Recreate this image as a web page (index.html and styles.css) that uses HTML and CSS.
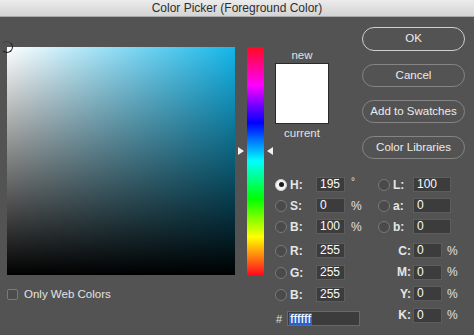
FILE: index.html
```html
<!DOCTYPE html>
<html>
<head>
<meta charset="utf-8">
<link rel="stylesheet" href="styles.css">
</head>
<body>
<div class="window">
  <div class="titlebar">Color Picker (Foreground Color)</div>
  <div class="main">
    <div class="leftcol">
      <div class="field"><span class="marker"></span></div>
      <div class="webcolors"><span class="checkbox"></span><span>Only Web Colors</span></div>
    </div>
    <div class="hue"><span class="arrow arrow-l"></span><span class="arrow arrow-r"></span></div>
    <div class="right">
      <div class="top">
        <div class="swatchcol">
          <div class="swlabel">new</div>
          <div class="swatch"></div>
          <div class="swlabel">current</div>
        </div>
        <div class="buttons">
          <div class="btn btn-default">OK</div>
          <div class="btn">Cancel</div>
          <div class="btn">Add to Swatches</div>
          <div class="btn">Color Libraries</div>
        </div>
      </div>
      <div class="fields">
        <div class="colA">
          <div class="group">
            <div class="row"><span class="radio checked"></span><span class="lbl">H:</span><span class="inp">195</span><span class="unit deg">°</span></div>
            <div class="row"><span class="radio"></span><span class="lbl">S:</span><span class="inp">0</span><span class="unit">%</span></div>
            <div class="row"><span class="radio"></span><span class="lbl">B:</span><span class="inp">100</span><span class="unit">%</span></div>
          </div>
          <div class="group rgb">
            <div class="row"><span class="radio"></span><span class="lbl">R:</span><span class="inp">255</span></div>
            <div class="row"><span class="radio"></span><span class="lbl">G:</span><span class="inp">255</span></div>
            <div class="row"><span class="radio"></span><span class="lbl">B:</span><span class="inp">255</span></div>
          </div>
          <div class="row hexrow"><span class="hash">#</span><span class="inp hex"><span class="sel">ffffff</span></span></div>
        </div>
        <div class="colB">
          <div class="group">
            <div class="row"><span class="radio"></span><span class="lbl">L:</span><span class="inp wide">100</span></div>
            <div class="row"><span class="radio"></span><span class="lbl">a:</span><span class="inp wide">0</span></div>
            <div class="row"><span class="radio"></span><span class="lbl">b:</span><span class="inp wide">0</span></div>
          </div>
          <div class="group cmyk">
            <div class="row"><span class="rlbl">C:</span><span class="inp">0</span><span class="unit">%</span></div>
            <div class="row"><span class="rlbl">M:</span><span class="inp">0</span><span class="unit">%</span></div>
            <div class="row"><span class="rlbl">Y:</span><span class="inp">0</span><span class="unit">%</span></div>
            <div class="row"><span class="rlbl">K:</span><span class="inp">0</span><span class="unit">%</span></div>
          </div>
        </div>
      </div>
    </div>
  </div>
</div>
</body>
</html>
```
FILE: styles.css
```css
* { box-sizing: border-box; }
html, body {
  margin: 0;
  padding: 0;
  background: #535353;
}
body {
  width: 474px;
  height: 335px;
  overflow: hidden;
  font-family: "Liberation Sans", Arial, sans-serif;
  color: #e4e4e4;
}
.window {
  width: 474px;
  height: 335px;
  background: #535353;
}
.titlebar {
  height: 17px;
  background: linear-gradient(to bottom, #ececec, #d3d3d3);
  border-bottom: 1px solid #a9a9a9;
  color: #2e2e2e;
  font-size: 12px;
  line-height: 17px;
  text-align: center;
}
.main {
  display: flex;
  padding-left: 7px;
}
.leftcol {
  display: flex;
  flex-direction: column;
  padding-top: 30px;
  width: 228px;
}
.field {
  position: relative;
  width: 228px;
  height: 228px;
  background:
    linear-gradient(to top, #000, rgba(0,0,0,0)),
    linear-gradient(to right, #fff, #14b6ea);
}
.marker {
  position: absolute;
  left: -6px;
  top: -6px;
  width: 12px;
  height: 12px;
  border: 1.5px solid #222;
  border-left-color: transparent;
  border-top-color: rgba(34,34,34,0.4);
  border-radius: 50%;
}
.webcolors {
  display: flex;
  align-items: center;
  margin-top: 13px;
  font-size: 11.5px;
  gap: 6px;
  color: #e2e2e2;
}
.checkbox {
  width: 11px;
  height: 11px;
  border: 1px solid #7a7a7a;
  border-radius: 2px;
  background: #4c4c4c;
}
.hue {
  position: relative;
  margin-top: 30px;
  margin-left: 12px;
  width: 17px;
  height: 228px;
  background: linear-gradient(to bottom, #ff0a1e, #ff00ff 16.67%, #0000ff 33.33%, #00ffff 50%, #00ff00 66.67%, #ffff00 83.33%, #ff0a1e);
}
.arrow {
  position: absolute;
  top: 100px;
  width: 0;
  height: 0;
  border-top: 4px solid transparent;
  border-bottom: 4px solid transparent;
}
.arrow-l {
  left: -9px;
  border-left: 6px solid #f2f2f2;
}
.arrow-r {
  right: -9px;
  border-right: 6px solid #f2f2f2;
}
.right {
  margin-left: 11px;
  display: flex;
  flex-direction: column;
}
.top {
  display: flex;
  height: 160px;
}
.swatchcol {
  width: 87px;
  padding-top: 31px;
  display: flex;
  flex-direction: column;
}
.swlabel {
  width: 54px;
  text-align: center;
  font-size: 11.5px;
  line-height: 14px;
  color: #e2e2e2;
}
.swatch {
  width: 54px;
  height: 61px;
  margin: 1px 0 2px;
  background: #fff;
  border: 1px solid #2a2a2a;
}
.buttons {
  padding-top: 10px;
  display: flex;
  flex-direction: column;
  gap: 13px;
}
.btn {
  width: 103px;
  height: 23px;
  border: 1px solid #858585;
  border-radius: 12px;
  font-size: 11.5px;
  line-height: 21px;
  text-align: center;
  color: #ececec;
}
.btn-default {
  border: 1.5px solid #cfcfcf;
  height: 24px;
}
.fields {
  display: flex;
}
.colA {
  width: 87px;
  display: flex;
  flex-direction: column;
}
.colB {
  padding-left: 16px;
  display: flex;
  flex-direction: column;
}
.group {
  display: flex;
  flex-direction: column;
  gap: 6px;
}
.rgb {
  margin-top: 9px;
  gap: 7px;
}
.cmyk {
  margin-top: 9px;
  gap: 6.5px;
}
.row {
  display: flex;
  align-items: center;
  height: 15px;
}
.hexrow {
  margin-top: 9px;
}
.radio {
  width: 12px;
  height: 12px;
  border-radius: 50%;
  border: 1px solid #787878;
  background: #4a4a4a;
  flex: none;
}
.radio.checked {
  background: #f4f4f4;
  border-color: #cfcfcf;
  display: flex;
  align-items: center;
  justify-content: center;
}
.radio.checked::after {
  content: "";
  width: 5px;
  height: 5px;
  border-radius: 50%;
  background: #1a1a1a;
}
.lbl {
  width: 29px;
  padding-left: 3px;
  font-size: 12px;
  font-weight: bold;
  color: #e6e6e6;
}
.colB .lbl {
  width: 23px;
}
.rlbl {
  width: 35px;
  padding-right: 2px;
  text-align: right;
  font-size: 12px;
  font-weight: bold;
  color: #e6e6e6;
}
.inp {
  width: 29px;
  height: 15px;
  background: #3c3c3c;
  border: 1px solid #5d5d5d;
  color: #fafafa;
  font-size: 12px;
  line-height: 13px;
  padding-left: 3px;
  flex: none;
}
.inp.wide {
  width: 38px;
}
.unit {
  margin-left: 6px;
  font-size: 12px;
  color: #e0e0e0;
}
.cmyk .unit {
  margin-left: 5px;
}
.deg {
  align-self: flex-start;
  font-size: 10px;
  line-height: 10px;
}
.hash {
  width: 12px;
  padding-left: 1px;
  font-size: 11px;
  color: #e0e0e0;
}
.inp.hex {
  width: 73px;
  border: 1px solid #2f6fd8;
  padding-left: 1px;
  display: flex;
  align-items: center;
}
.sel {
  background: #2a62c9;
  color: #fff;
  font-size: 13.5px;
  line-height: 12px;
  padding: 0 1px;
}
```
